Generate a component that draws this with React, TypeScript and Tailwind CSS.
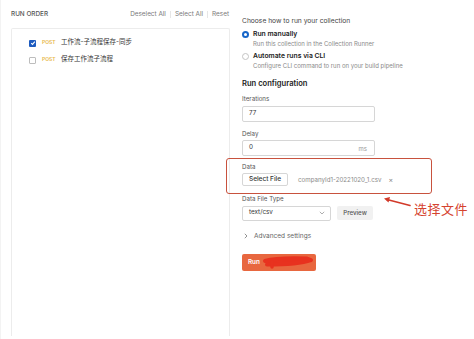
import React from "react";

const font = { fontFamily: 'Inter, "Noto Sans CJK SC", sans-serif' };

function Check({ checked }: { checked: boolean }) {
  return checked ? (
    <span className="w-[7px] h-[7px] rounded-[1px] bg-[#1d5bbf] flex items-center justify-center shrink-0">
      <svg width="6" height="6" viewBox="0 0 10 10">
        <path d="M2 5.2 L4.2 7.3 L8 2.8" fill="none" stroke="white" strokeWidth="1.8" />
      </svg>
    </span>
  ) : (
    <span className="w-[7px] h-[7px] rounded-[1px] border border-[#bdbdbd] bg-white shrink-0" />
  );
}

export default function App() {
  return (
    <div
      className="w-[474px] h-[339px] bg-white flex overflow-hidden relative text-[#212121]"
      style={font}
    >
      {/* left column */}
      <div className="w-[230px] pl-[10px] pt-[10px] flex flex-col border-l border-[#f3f3f3]">
        <div className="flex items-center h-[8px] leading-[8px] text-[6.4px] pr-[1px]">
          <span className="text-[#555] font-medium">RUN ORDER</span>
          <span className="ml-auto text-[#7a7a7a]">Deselect All</span>
          <span className="mx-[4px] w-px h-[7px] bg-[#e6e6e6]" />
          <span className="text-[#7a7a7a]">Select All</span>
          <span className="mx-[4px] w-px h-[7px] bg-[#e6e6e6]" />
          <span className="text-[#7a7a7a]">Reset</span>
        </div>
        <div className="mt-[10px] h-[308px] border border-b-0 border-[#ececec] rounded-t-[2px] pl-[17px] pt-[9px] flex flex-col gap-[7px]">
          <div className="flex items-center h-[10px]">
            <Check checked />
            <span className="ml-[6px] w-[19px] text-[5px] font-semibold text-[#e8b84a]">POST</span>
            <span className="text-[6.5px] text-[#333]">工作流-子流程保存-同步</span>
          </div>
          <div className="flex items-center h-[10px]">
            <Check checked={false} />
            <span className="ml-[6px] w-[19px] text-[5px] font-semibold text-[#e8b84a]">POST</span>
            <span className="text-[6.5px] text-[#333]">保存工作流子流程</span>
          </div>
        </div>
      </div>

      {/* right column */}
      <div className="flex-1 pl-[12px] pt-[17px] flex flex-col">
        <div className="h-[8px] leading-[8px] text-[6.7px] text-[#444]">
          Choose how to run your collection
        </div>

        <div className="mt-[5px] flex items-center h-[8px]">
          <span className="w-[7px] h-[7px] rounded-full border-[2px] border-[#1766c8] bg-white" />
          <span className="ml-[4px] text-[6.8px] font-semibold leading-[8px]">Run manually</span>
        </div>
        <div className="mt-[2px] ml-[11px] h-[8px] leading-[8px] text-[6px] text-[#8a8a8a]">
          Run this collection in the Collection Runner
        </div>

        <div className="mt-[4px] flex items-center h-[8px]">
          <span className="w-[7px] h-[7px] rounded-full border border-[#c4c4c4] bg-white" />
          <span className="ml-[4px] text-[6.8px] font-semibold leading-[8px]">Automate runs via CLI</span>
        </div>
        <div className="mt-[2px] ml-[11px] h-[8px] leading-[8px] text-[6px] text-[#8a8a8a]">
          Configure CLI command to run on your build pipeline
        </div>

        <div className="mt-[9px] h-[10px] leading-[10px] text-[7.6px] font-semibold text-[#222]">
          Run configuration
        </div>

        <div className="mt-[6px] h-[8px] leading-[8px] text-[6.2px] text-[#555]">Iterations</div>
        <div className="mt-[3px] w-[133px] h-[16px] border border-[#d6d6d6] rounded-[2px] flex items-center pl-[6px] text-[6.3px] text-[#333]">
          77
        </div>

        <div className="mt-[8px] h-[8px] leading-[8px] text-[6.2px] text-[#555]">Delay</div>
        <div className="mt-[2px] w-[133px] h-[16px] border border-[#d6d6d6] rounded-[2px] flex items-center pl-[6px] pr-[7px] text-[6.3px] text-[#333]">
          0<span className="ml-auto text-[#999] text-[6px]">ms</span>
        </div>

        <div className="mt-[7px] h-[8px] leading-[8px] text-[6.2px] text-[#555]">Data</div>
        <div className="mt-[2px] flex items-center h-[13px]">
          <span className="w-[46px] h-[13px] border border-[#d6d6d6] rounded-[2px] flex items-center justify-center text-[6.5px] font-medium text-[#333]">
            Select File
          </span>
          <span className="ml-[10px] text-[6.2px] text-[#8a8a8a]">companyId1-20221020_1.csv</span>
          <span className="ml-[7px] text-[7px] text-[#888] leading-none">×</span>
        </div>

        <div className="mt-[9px] h-[8px] leading-[8px] text-[6.2px] text-[#555]">Data File Type</div>
        <div className="mt-[3px] flex items-center h-[14px]">
          <span className="w-[89px] h-[15px] border border-[#d6d6d6] rounded-[2px] flex items-center pl-[6px] pr-[5px] text-[6.3px] text-[#333]">
            text/csv
            <svg className="ml-auto" width="6" height="4" viewBox="0 0 6 4">
              <path d="M0.8 0.8 L3 3 L5.2 0.8" fill="none" stroke="#999" strokeWidth="0.8" />
            </svg>
          </span>
          <span className="ml-[6px] w-[36px] h-[14px] rounded-[2px] bg-[#f1f1f1] flex items-center justify-center text-[6.2px] font-medium text-[#555]">
            Preview
          </span>
        </div>

        <div className="mt-[12px] flex items-center h-[8px] leading-[8px] text-[6.5px] text-[#666]">
          <svg className="ml-[2px]" width="4" height="6" viewBox="0 0 4 6">
            <path d="M0.8 0.8 L3 3 L0.8 5.2" fill="none" stroke="#777" strokeWidth="0.8" />
          </svg>
          <span className="ml-[6px]">Advanced settings</span>
        </div>

        <div className="mt-[14px] relative w-[74px] h-[17px] rounded-[2px] bg-[#e8673f] flex items-center pl-[6px] text-[6.3px] font-semibold text-white">
          Run
          <svg className="absolute left-[19px] top-[1px]" width="54" height="15" viewBox="0 0 54 15">
            <path
              d="M4 6 C 14 3, 32 3, 46 3.5 L 50 5 C 40 8.5, 22 9.5, 6 9.5"
              fill="#e8321f"
              stroke="#e8321f"
              strokeWidth="4"
              strokeLinejoin="round"
              strokeLinecap="round"
            />
            <path d="M11 7 L 11 12" stroke="#e8321f" strokeWidth="3.5" strokeLinecap="round" />
          </svg>
        </div>
      </div>

      {/* annotation overlay */}
      <div className="absolute left-[226px] top-[158px] w-[206px] h-[36px] border-[1.5px] border-[#c8523e] rounded-[3px]" />
      <svg className="absolute left-[382px] top-[196px]" width="30" height="12" viewBox="0 0 30 12">
        <path d="M28 9.5 L 5 3.5" stroke="#d23a2a" strokeWidth="1.6" strokeLinecap="round" />
        <path d="M2 2.6 L 8 1 L 6.5 6.5 Z" fill="#d23a2a" />
      </svg>
      <div
        className="absolute left-[414px] top-[201px] text-[13px] leading-[16px] text-[#d5432f] tracking-[0.5px]"
        style={{ fontFamily: '"Noto Sans CJK SC", sans-serif' }}
      >
        选择文件
      </div>
    </div>
  );
}
